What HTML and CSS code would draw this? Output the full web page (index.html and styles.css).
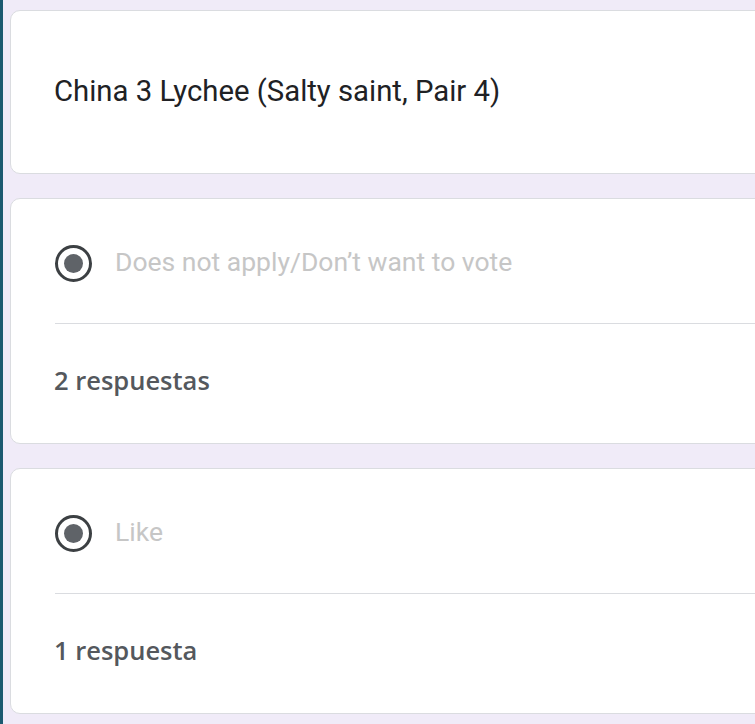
FILE: index.html
```html
<!DOCTYPE html>
<html>
<head>
<meta charset="utf-8">
<link rel="stylesheet" href="styles.css">
</head>
<body>
<div class="page">
  <div class="card title-card">
    <div class="title">China 3 Lychee (Salty saint, Pair 4)</div>
  </div>
  <div class="card option-card">
    <div class="option">
      <span class="radio"><span class="dot"></span></span>
      <span class="label">Does not apply/Don’t want to vote</span>
    </div>
    <div class="divider"></div>
    <div class="count">2 respuestas</div>
  </div>
  <div class="card option-card">
    <div class="option">
      <span class="radio"><span class="dot"></span></span>
      <span class="label">Like</span>
    </div>
    <div class="divider"></div>
    <div class="count">1 respuesta</div>
  </div>
</div>
</body>
</html>
```
FILE: styles.css
```css
html, body {
  margin: 0;
  padding: 0;
  height: 100%;
  overflow: hidden;
  background: #f0ebf8;
}
.page {
  border-left: 3px solid #1b5a70;
  min-height: 100%;
  box-sizing: border-box;
  padding: 10px 0 0 7px;
  display: flex;
  flex-direction: column;
  gap: 24px;
  font-family: Roboto, "Liberation Sans", sans-serif;
  overflow: hidden;
}
.card {
  width: 760px;
  flex: none;
  background: #fff;
  border: 1px solid #dadce0;
  border-radius: 10px;
  box-sizing: border-box;
}
.title-card {
  height: 164px;
  display: flex;
  align-items: center;
  padding: 0 0 2px 43px;
}
.title {
  font-size: 29.3px;
  color: #202124;
}
.option-card {
  height: 246px;
  padding: 46px 0 0 44px;
}
.option {
  display: flex;
  align-items: center;
  gap: 23px;
  height: 37px;
}
.radio {
  width: 37px;
  height: 37px;
  box-sizing: border-box;
  border: 3px solid #3c4043;
  border-radius: 50%;
  display: flex;
  align-items: center;
  justify-content: center;
  flex: none;
}
.dot {
  width: 19px;
  height: 19px;
  border-radius: 50%;
  background: #5f6368;
}
.label {
  font-size: 26.5px;
  line-height: 37px;
  padding-bottom: 4px;
  color: #c6c6c6;
}
.divider {
  height: 1px;
  background: #dadce0;
  margin-top: 41px;
}
.count {
  margin-top: 41px;
  margin-left: -1px;
  font-family: "Open Sans", Roboto, sans-serif;
  font-weight: 600;
  font-size: 25.5px;
  line-height: 30px;
  color: #54585d;
}
```
